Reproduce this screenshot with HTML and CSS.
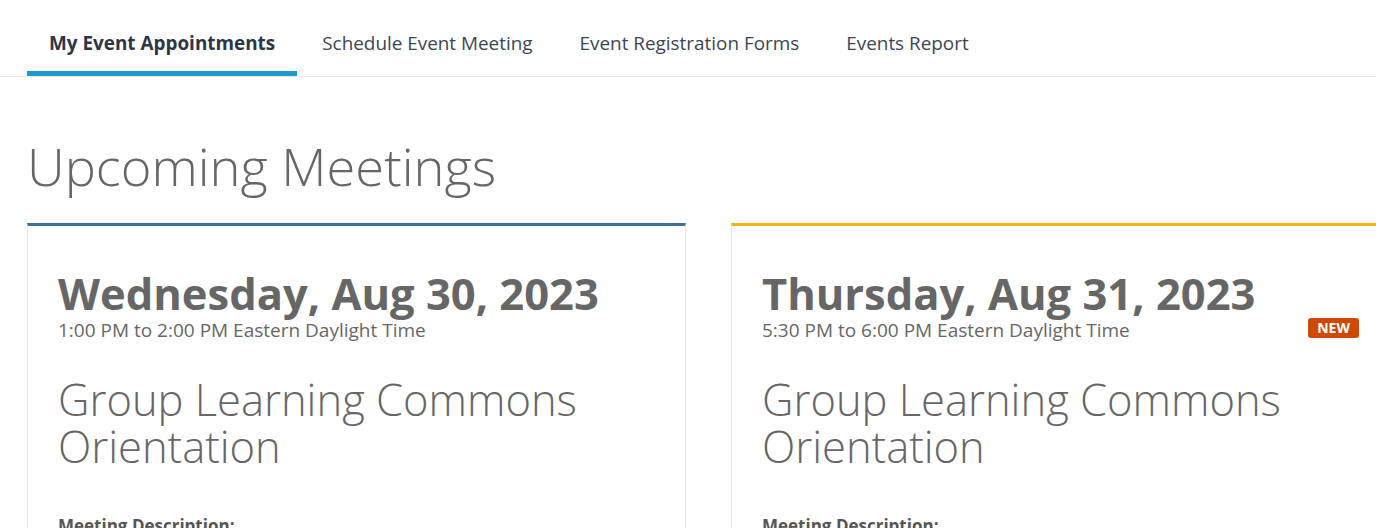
FILE: index.html
```html
<!DOCTYPE html>
<html lang="en">
<head>
    <meta charset="UTF-8">
    <meta name="viewport" content="width=device-width, initial-scale=1.0">
    <title>My Event Appointments</title>
    <link rel="stylesheet" href="styles.css">
</head>
<body>

<nav class="tabs">
    <a class="tab active" href="#">My Event Appointments</a>
    <a class="tab" href="#">Schedule Event Meeting</a>
    <a class="tab" href="#">Event Registration Forms</a>
    <a class="tab" href="#">Events Report</a>
</nav>

<main class="page">
    <h1 class="page-title">Upcoming Meetings</h1>

    <div class="cards">
        <div class="card card-blue">
            <h2 class="card-date">Wednesday, Aug 30, 2023</h2>
            <div class="card-time-row">
                <p class="card-time">1:00 PM to 2:00 PM Eastern Daylight Time</p>
            </div>
            <h3 class="card-title">Group Learning Commons Orientation</h3>
            <p class="card-label">Meeting Description:</p>
        </div>

        <div class="card card-yellow">
            <h2 class="card-date">Thursday, Aug 31, 2023</h2>
            <div class="card-time-row">
                <p class="card-time">5:30 PM to 6:00 PM Eastern Daylight Time</p>
                <span class="badge">NEW</span>
            </div>
            <h3 class="card-title">Group Learning Commons Orientation</h3>
            <p class="card-label">Meeting Description:</p>
        </div>
    </div>
</main>

</body>
</html>
```

FILE: styles.css
```css
* {
    box-sizing: border-box;
    margin: 0;
    padding: 0;
    font-family: "Open Sans", Arial, sans-serif;
}

body {
    background: #fff;
    color: #666;
    overflow: hidden;
}

.tabs {
    display: flex;
    padding: 0 27px;
    border-bottom: 1px solid #e6e7e9;
    height: 77px;
    align-items: flex-end;
}

.tab {
    display: block;
    padding: 0 22px 16px;
    font-size: 18.9px;
    color: #3b4556;
    text-decoration: none;
    border-bottom: 5px solid transparent;
    line-height: 24px;
    margin-right: 3px;
}

.tab.active {
    font-weight: 700;
    color: #2c3646;
    border-bottom-color: #1b9bc9;
}

.page {
    padding: 0 27px;
}

.page-title {
    font-weight: 300;
    font-size: 52.4px;
    line-height: 1.2;
    color: #666;
    margin: 58px 0 25px;
}

.cards {
    display: flex;
    gap: 45px;
    width: 1400px;
}

.card {
    width: 659px;
    flex-shrink: 0;
    border: 1px solid #e6e6e6;
    border-top: 3px solid #3d6e9e;
    padding: 44px 30px 0;
    height: 320px;
}

.card-yellow {
    border-top-color: #f4b01c;
}

.card-date {
    font-size: 43.5px;
    font-weight: 700;
    line-height: 48px;
    color: #666;
}

.card-time-row {
    display: flex;
    justify-content: space-between;
    align-items: center;
}

.card-time {
    font-size: 19px;
    line-height: 24px;
    color: #666;
}

.badge {
    background: #cc4a06;
    color: #fff;
    font-size: 14px;
    font-weight: 700;
    padding: 1px 9px;
    border-radius: 3px;
    line-height: 18px;
    margin-bottom: 4px;
}

.card-title {
    font-size: 43.5px;
    font-weight: 300;
    line-height: 47px;
    color: #666;
    margin-top: 34px;
}

.card-label {
    font-size: 17px;
    font-weight: 700;
    color: #555;
    margin-top: 44px;
}
```
